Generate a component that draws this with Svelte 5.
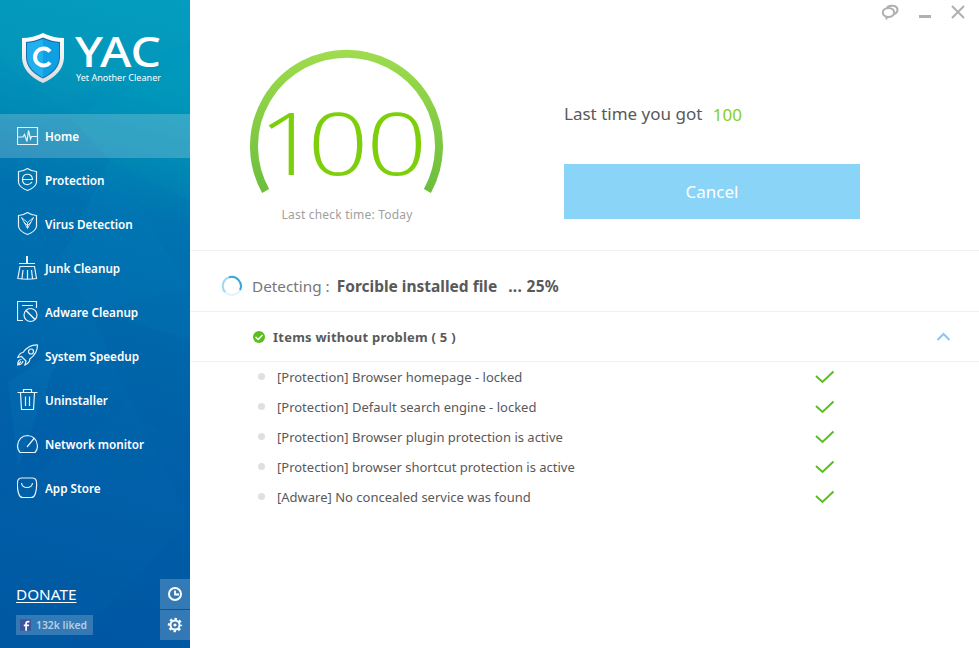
<script lang="ts">
	type MenuItem = { label: string; icon: string };

	const menu: MenuItem[] = [
		{ label: 'Home', icon: 'pulse' },
		{ label: 'Protection', icon: 'shield-e' },
		{ label: 'Virus Detection', icon: 'shield-v' },
		{ label: 'Junk Cleanup', icon: 'broom' },
		{ label: 'Adware Cleanup', icon: 'adware' },
		{ label: 'System Speedup', icon: 'rocket' },
		{ label: 'Uninstaller', icon: 'trash' },
		{ label: 'Network monitor', icon: 'gauge' },
		{ label: 'App Store', icon: 'bag' }
	];

	const results = [
		'[Protection] Browser homepage - locked',
		'[Protection] Default search engine - locked',
		'[Protection] Browser plugin protection is active',
		'[Protection] browser shortcut protection is active',
		'[Adware] No concealed service was found'
	];

	let active = $state('Home');
	let expanded = $state(true);
</script>

<div class="app">
	<aside class="sidebar">
		<svg class="facets" width="190" height="648" viewBox="0 0 190 648">
			<path d="M0 0H190V40L60 105L0 60Z" fill="#fff" opacity=".01" />
			<path d="M70 118L190 60V200L110 160Z" fill="#00c0c8" opacity=".05" />
			<path d="M0 120L70 118L110 160L60 260L0 200Z" fill="#004c9c" opacity=".05" />
			<path d="M110 160L190 290L90 310L60 260Z" fill="#00a0d8" opacity=".05" />
			<path d="M8 382L60 350L18 468Z" fill="#10a0d8" opacity=".1" />
			<path d="M90 310L190 340V460L130 400Z" fill="#00408f" opacity=".06" />
			<path d="M0 500L130 400L190 520L70 648H0Z" fill="#0080c0" opacity=".05" />
		</svg>
		<div class="logo">
			<svg width="146" height="56" viewBox="0 0 146 56">
				<defs>
					<linearGradient id="rim" x1="0" y1="0" x2="0" y2="1">
						<stop offset="0" stop-color="#fff" />
						<stop offset="1" stop-color="#d9dde2" />
					</linearGradient>
				</defs>
				<path d="M22 3Q32 8 43 8V28Q42 44 22 53Q2 44 1 28V8Q12 8 22 3Z" fill="url(#rim)" />
				<path d="M22 7.500Q31 11.500 39 12V28Q38 41 22 48.500Q6 41 5 28V12Q13 11.500 22 7.500Z" fill="#1470a4" />
				<path d="M22 9Q30 12.500 38 13V28Q37 40 22 47.500Z" fill="#0fa0e4" />
				<path d="M22 9Q14 12.500 6 13V28Q7 40 22 47.500Z" fill="#22b0ee" />
				<path d="M29 21.500A8.500 8.500 0 1 0 29 32.500" fill="none" stroke="#fff" stroke-width="4" />
				<text class="name" x="54" y="36.500" textLength="86" lengthAdjust="spacingAndGlyphs">YAC</text>
				<text class="tagline" x="55" y="51" textLength="85" lengthAdjust="spacingAndGlyphs">Yet Another Cleaner</text>
			</svg>
		</div>

		<nav class="menu">
			{#each menu as item}
				<button class="menu-item" class:active={active === item.label} onclick={() => (active = item.label)}>
					<svg class="icon" width="22" height="24" viewBox="0 0 22 24">
						{#if item.icon === 'pulse'}
							<path d="M.5 3.500H20.500V20.500H.5ZM1 13H6L7.500 10.500L10 17.500L11.500 6.500L13.500 15L14.500 12.500H20" />
						{:else if item.icon === 'shield-e'}
							<path d="M10.500 .5Q15 3.500 19.500 3.500V14.500Q18.500 19.500 10.500 22.500Q2.500 19.500 1.500 14.500V3.500Q6 3.500 10.500 .5Z" />
							<path d="M5.500 11.500H15.500C15.500 4.500 5.500 4.500 5.500 11.500C5.500 17.500 12.500 18 15 14" />
						{:else if item.icon === 'shield-v'}
							<path d="M10.500 .5Q15 3.500 19.500 3.500V14.500Q18.500 19.500 10.500 22.500Q2.500 19.500 1.500 14.500V3.500Q6 3.500 10.500 .5Z" />
							<path d="M4.500 5.500L10.500 16.500L16.500 5.500L10.500 10.500ZM7 10L10.500 13.500L14 10M10.500 10.500V16" stroke-width=".9" />
						{:else if item.icon === 'broom'}
							<path d="M10 0V7" stroke-width="2" />
							<path d="M2 7.500H18M3 10.500H17.500L19.500 22.500Q10 24 .8 22.500ZM6 14L5 22.500M10.500 14V23M14.500 14L15.500 22.500" />
						{:else if item.icon === 'adware'}
							<path d="M6 20.500H.5V1.500H19.500V8M5 5.500H16" />
							<circle cx="13.500" cy="15" r="6.500" />
							<path d="M9 10.500L18 19.500" stroke-width="1.600" />
						{:else if item.icon === 'rocket'}
							<path d="M20.500 1Q12 .5 6 8.500Q3 8.500 .8 13.500L4.500 12.500L9 17L8 21Q13 18.500 12.800 15Q20.500 9.500 20.500 1Z" />
							<circle cx="14" cy="7.500" r="2.500" />
							<path d="M4.500 15.500Q.5 15.500 .8 21Q5.500 20.500 6 17M1 20.500L4 17.500" />
						{:else if item.icon === 'trash'}
							<path d="M.5 4.500H20.500M6.500 4V1.500H14.500V4M3.500 5L4.500 21.500H16.500L17.500 5M8.500 8.500V18M12.500 8.500V18" />
						{:else if item.icon === 'gauge'}
							<path d="M3 20.500Q.5 18 .5 14Q1.500 4 10.500 3.500Q19.500 4 20.500 14Q20.500 18 18 20.500ZM10 15L17 6.500" />
						{:else}
							<path d="M5 2H15Q19.500 2 19.500 6.500Q20 12 18.500 17Q17.500 21.500 14 21.500H6Q2.500 21.500 1.500 17Q0 12 .5 6.500Q.5 2 5 2ZM4.500 7Q5 11.500 10 11.500Q15 11.500 15.500 7" />
						{/if}
					</svg>
					<span>{item.label}</span>
				</button>
			{/each}
		</nav>

		<footer class="side-footer">
			<div class="social">
				<a class="donate" href="#donate">DONATE</a>
				<div class="likes">
					<svg width="12" height="12" viewBox="0 0 12 12">
						<path d="M0 0H12V12H0Z" fill="#3d539b" />
						<path d="M6.500 12V4.500Q6.500 2.500 8.500 2.500H10M4 6.500H9.500" fill="none" stroke="#fff" stroke-width="1.800" />
					</svg>
					<span>132k liked</span>
				</div>
			</div>
			<div class="tools">
				<button class="tool" aria-label="History">
					<svg width="16" height="16" viewBox="0 0 16 16">
						<circle cx="8" cy="8" r="6" stroke-width="2" />
						<path d="M8 4.500V8.500H12" stroke-width="1.800" />
					</svg>
				</button>
				<button class="tool" aria-label="Settings">
					<svg width="16" height="16" viewBox="0 0 16 16">
						<circle cx="8" cy="8" r="6" stroke-width="2.400" stroke-dasharray="2.400 2.312" stroke-dashoffset="1.200" />
						<circle cx="8" cy="8" r="4.500" stroke-width="2" />
						<circle cx="8" cy="8" r="1.600" fill="#fff" stroke="none" />
					</svg>
				</button>
			</div>
		</footer>
	</aside>

	<main class="main">
		<section class="summary">
			<div class="gauge">
				<svg width="194" height="148" viewBox="0 0 194 148">
					<defs>
						<linearGradient id="arc" x1="0" y1="0" x2="0" y2="148" gradientUnits="userSpaceOnUse">
							<stop offset="0" stop-color="#a0dc4e" />
							<stop offset="1" stop-color="#69bd3b" />
						</linearGradient>
					</defs>
					<path d="M15.600 142A92.500 92.500 0 1 1 177.400 142" fill="none" stroke="url(#arc)" stroke-width="8" />
					<text class="score" transform="scale(1.23 1)" x="6.700 46.800 94.600" y="126">100</text>
				</svg>
				<p class="checked">Last check time: Today</p>
			</div>
			<div class="last">
				<p class="last-score">Last time you got <b>100</b></p>
				<button class="cancel">Cancel</button>
			</div>
			<div class="window-controls">
				<svg width="18" height="18" viewBox="0 0 18 18">
					<path d="M6 6C7 3 16.500 2.500 16.500 8Q16.500 10.500 13.500 12" />
					<ellipse cx="7.500" cy="10.500" rx="5.700" ry="4.500" />
					<path d="M5.500 14.500V17.500" />
				</svg>
				<svg width="12" height="18" viewBox="0 0 12 18"><path d="M0 14.500H12" stroke-width="3" /></svg>
				<svg width="14" height="18" viewBox="0 0 14 18"><path d="M1 4L13 16M13 4L1 16" /></svg>
			</div>
		</section>

		<section class="detecting">
			<svg width="22" height="22" viewBox="0 0 22 22">
				<circle cx="11" cy="11" r="9" stroke="#dff1fa" />
				<path d="M4 17A9.200 9.200 0 0 1 9 2" stroke="#a5d8ef" />
				<path d="M8 2.300A9.200 9.200 0 0 1 19 15" stroke="#36a8d8" />
			</svg>
			<span class="stage">Detecting :</span>
			<b class="target">Forcible installed file</b>
			<b class="percent">... 25%</b>
		</section>

		<button class="group" onclick={() => (expanded = !expanded)}>
			<svg width="12" height="12" viewBox="0 0 12 12">
				<circle cx="6" cy="6" r="6" fill="#58bf1d" />
				<path d="M2.500 6L5.200 8.500L9.500 4" fill="none" stroke="#fff" stroke-width="1.500" />
			</svg>
			<span>Items without problem ( {results.length} )</span>
			<svg class="chevron" width="15" height="10" viewBox="0 0 15 10">
				<path d="M1.500 8L7.500 2L13.500 8" fill="none" stroke="#8ec3f0" stroke-width="2" />
			</svg>
		</button>

		{#if expanded}
			<ul class="results">
				{#each results as result}
					<li>
						<span class="dot"></span>
						<span class="text">{result}</span>
						<svg width="20" height="14" viewBox="0 0 20 14">
							<path d="M1 6L7.500 12L18.500 1.500" fill="none" stroke="#58bf1d" stroke-width="2" />
						</svg>
					</li>
				{/each}
			</ul>
		{/if}
	</main>
</div>

<style>
	:global(body) {
		margin: 0;
		background: #fff;
	}
	.app {
		display: flex;
		width: 979px;
		height: 648px;
		overflow: hidden;
		font-family: 'Noto Sans', 'Open Sans', sans-serif;
		color: #595959;
	}
	button {
		border: none;
		padding: 0;
		background: none;
		font: inherit;
		color: inherit;
		cursor: pointer;
	}
	p,
	ul {
		margin: 0;
		padding: 0;
	}

	.sidebar {
		position: relative;
		display: flex;
		flex-direction: column;
		flex: 0 0 190px;
		color: #fff;
		background: linear-gradient(194deg, #009cbf 0%, #0095bb 14%, #0088b5 23%, #0073b0 33%, #006aad 50%, #005fa8 68%, #0055a1 100%);
	}
	.facets {
		position: absolute;
		inset: 0;
	}
	.logo {
		position: relative;
		height: 84px;
		padding: 30px 0 0 21px;
	}
	.logo svg {
		overflow: visible;
	}
	.logo .name {
		font-size: 42px;
		font-weight: 500;
		fill: #fff;
	}
	.logo .tagline {
		font-size: 9.5px;
		fill: #fff;
	}
	.menu {
		position: relative;
		flex: 1;
	}
	.menu-item {
		display: flex;
		align-items: center;
		gap: 6px;
		width: 100%;
		height: 44px;
		padding-left: 17px;
		font-size: 13px;
		font-weight: 600;
	}
	.menu-item span,
	.likes span {
		transform: scaleX(0.9);
		transform-origin: left;
	}
	.menu-item.active {
		background: rgba(255, 255, 255, 0.2);
	}
	.icon {
		fill: none;
		stroke: #e6f3fa;
		stroke-width: 1.2;
	}
	.side-footer {
		position: relative;
		display: flex;
		justify-content: space-between;
		height: 69px;
	}
	.social {
		padding: 4px 0 0 16px;
	}
	.donate {
		display: block;
		width: 61px;
		font-size: 15.3px;
		line-height: 22px;
		color: #fff;
		text-underline-offset: 2px;
	}
	.likes {
		display: flex;
		align-items: center;
		gap: 5px;
		box-sizing: border-box;
		width: 77px;
		height: 20px;
		margin-top: 10px;
		padding: 0 0 1px 4px;
		background: rgba(255, 255, 255, 0.2);
		font-size: 11.5px;
		font-weight: 600;
		color: #b5cfe6;
		white-space: nowrap;
	}
	.tools {
		display: flex;
		flex-direction: column;
		gap: 1px;
	}
	.tool {
		display: flex;
		align-items: center;
		justify-content: center;
		width: 30px;
		height: 30px;
		background: rgba(255, 255, 255, 0.2);
	}
	.tool svg {
		fill: none;
		stroke: #fff;
	}

	.main {
		flex: 1;
		min-width: 0;
	}
	.summary {
		display: flex;
		height: 250px;
		border-bottom: 1px solid #f2f2f2;
	}
	.gauge {
		width: 194px;
		padding: 49px 0 0 60px;
	}
	.gauge svg {
		display: block;
		overflow: visible;
	}
	.score {
		font-family: 'Open Sans', sans-serif;
		font-size: 87px;
		font-weight: 300;
		fill: #7ccf0a;
	}
	.checked {
		margin-top: 9px;
		font-size: 12px;
		line-height: 18px;
		letter-spacing: 0.2px;
		text-align: center;
		color: #a0a0a0;
	}
	.last {
		width: 296px;
		padding: 101px 0 0 120px;
	}
	.last-score {
		font-size: 17px;
		line-height: 26px;
		white-space: nowrap;
	}
	.last-score b {
		position: relative;
		top: 1px;
		margin-left: 6px;
		font-weight: 400;
		color: #84d118;
	}
	.cancel {
		display: block;
		width: 296px;
		height: 55px;
		margin-top: 37px;
		background: #8ad4f8;
		font-size: 17px;
		color: #fff;
	}
	.window-controls {
		display: flex;
		gap: 20px;
		padding: 2px 0 0 21px;
		fill: none;
		stroke: #b0b0b0;
		stroke-width: 2;
	}
	.detecting {
		display: flex;
		align-items: center;
		box-sizing: border-box;
		height: 61px;
		padding: 9px 0 0 31px;
		border-bottom: 1px solid #f2f2f2;
		font-size: 15.5px;
	}
	.detecting svg {
		margin-right: 9px;
		fill: none;
		stroke-width: 2;
	}
	.stage {
		margin-right: 7px;
		font-size: 15.3px;
		color: #777;
	}
	.target {
		margin-right: 11px;
	}
	.percent {
		letter-spacing: 0.3px;
	}
	.group {
		display: flex;
		align-items: center;
		width: 100%;
		height: 50px;
		padding-left: 63px;
		border-bottom: 1px solid #f2f2f2;
		font-size: 13px;
		font-weight: 700;
		letter-spacing: 0.23px;
	}
	.group span {
		margin-left: 8px;
	}
	.chevron {
		margin: 0 28px 0 auto;
	}
	.results {
		list-style: none;
	}
	.results li {
		display: flex;
		align-items: center;
		height: 30px;
		padding-left: 68px;
		font-size: 13px;
	}
	.dot {
		width: 7px;
		height: 7px;
		margin: 0 12px 1px 0;
		border-radius: 50%;
		background: #e0e0e0;
	}
	.text {
		width: 538px;
	}
</style>
